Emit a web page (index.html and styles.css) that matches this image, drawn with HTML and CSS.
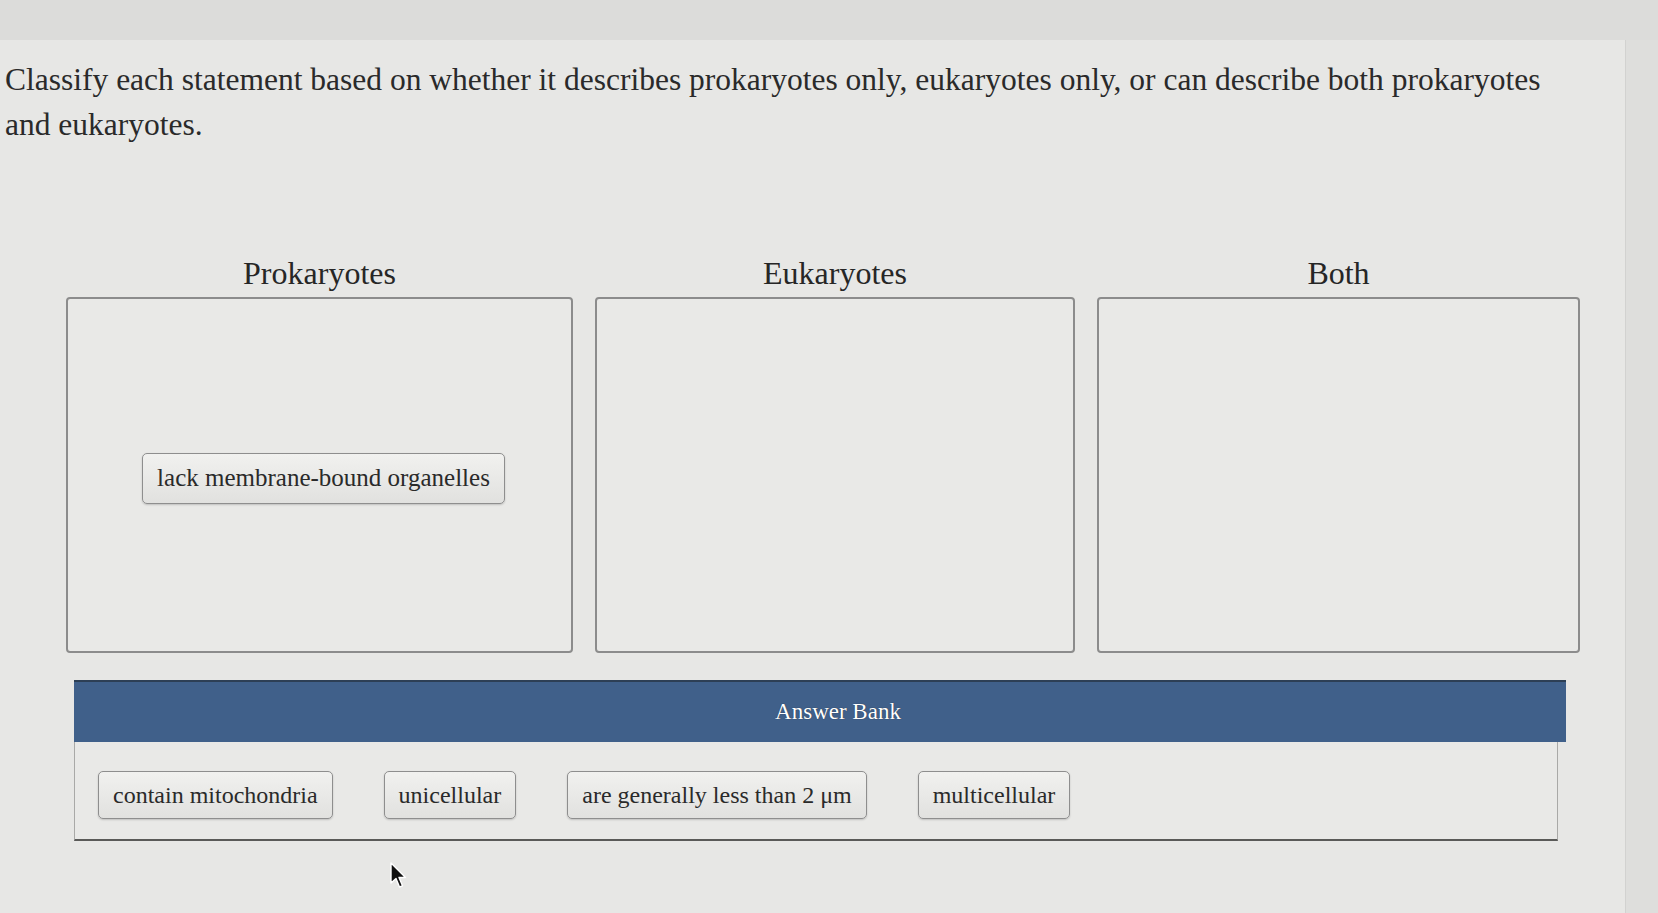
FILE: index.html
```html
<!DOCTYPE html>
<html lang="en">
<head>
<meta charset="utf-8">
<title>Classify prokaryotes and eukaryotes</title>
<link rel="stylesheet" href="styles.css">
</head>
<body>
<div class="screen">
  <div class="topbar"></div>
  <div class="content">
    <p class="question">Classify each statement based on whether it describes prokaryotes only, eukaryotes only, or can describe both prokaryotes and eukaryotes.</p>
    <div class="bins">
      <div class="bin">
        <div class="bin-label">Prokaryotes</div>
        <div class="bin-box">
          <span class="chip chip-large">lack membrane-bound organelles</span>
        </div>
      </div>
      <div class="bin">
        <div class="bin-label">Eukaryotes</div>
        <div class="bin-box"></div>
      </div>
      <div class="bin">
        <div class="bin-label">Both</div>
        <div class="bin-box"></div>
      </div>
    </div>
    <div class="bank">
      <div class="bank-header">Answer Bank</div>
      <div class="bank-body">
        <span class="chip">contain mitochondria</span>
        <span class="chip">unicellular</span>
        <span class="chip">are generally less than 2 μm</span>
        <span class="chip">multicellular</span>
      </div>
    </div>
  </div>
  <div class="right-edge"></div>
  <svg class="cursor" width="18" height="28" viewBox="0 0 18 28" aria-hidden="true">
    <path d="M1 1 L1 21 L6 16.5 L9.5 25 L12.5 23.8 L9 15.5 L15.5 15.5 Z" fill="#111" stroke="#fff" stroke-width="1.4" stroke-linejoin="round"/>
  </svg>
</div>
</body>
</html>
```

FILE: styles.css
```css
* { box-sizing: border-box; }

html, body {
  margin: 0;
  padding: 0;
  background: #e6e6e4;
}

.screen {
  position: relative;
  width: 1658px;
  height: 913px;
  overflow: hidden;
  background: #e7e7e5;
  font-family: "Liberation Serif", "Times New Roman", serif;
  color: #262626;
}

.topbar {
  height: 40px;
  background: #dcdcda;
}

.content {
  padding: 17px 0 0 5px;
  width: 1625px;
}

.question {
  margin: 0;
  font-size: 31.5px;
  line-height: 45px;
  color: #2a2a2a;
  width: 1575px;
}

.bins {
  display: grid;
  grid-template-columns: 507px 480px 483px;
  column-gap: 22px;
  margin: 106px 0 0 61px;
}

.bin-label {
  text-align: center;
  font-size: 32px;
  line-height: 40px;
  margin-bottom: 4px;
  color: #262626;
}

.bin-box {
  height: 356px;
  border: 2px solid #8c8c8c;
  border-radius: 4px;
  background: #e9e9e7;
  display: flex;
  align-items: center;
  justify-content: center;
}

.chip {
  display: inline-flex;
  align-items: center;
  height: 48px;
  padding: 0 14px;
  font-size: 24px;
  color: #2a2a2a;
  background: linear-gradient(#f1f1ef, #e1e1df);
  border: 1.5px solid #8e8e8e;
  border-radius: 5px;
  box-shadow: 0 1px 2px rgba(0, 0, 0, 0.18);
  white-space: nowrap;
}

.chip-large {
  height: 51px;
  font-size: 25px;
  padding: 0 14px;
  margin: 6px 0 0 8px;
}

.bank {
  margin: 27px 0 0 69px;
  width: 1492px;
}

.bank-header {
  height: 62px;
  background: #40608a;
  border-top: 2px solid #2d3f55;
  color: #ffffff;
  font-size: 23px;
  display: flex;
  align-items: center;
  justify-content: center;
  padding-left: 36px;
  text-shadow: 0 0 1px rgba(0, 0, 0, 0.6);
}

.bank-body {
  height: 99px;
  margin-right: 8px;
  background: #e9e9e7;
  border: 1px solid #a9a9a7;
  border-top: none;
  border-bottom: 2px solid #5a5a58;
  display: flex;
  align-items: flex-start;
  gap: 51px;
  padding: 29px 0 0 23px;
}

.right-edge {
  position: absolute;
  top: 40px;
  right: 0;
  width: 33px;
  height: 873px;
  background: #dededc;
  border-left: 1px solid #d2d2d0;
}

.cursor {
  position: absolute;
  left: 390px;
  top: 862px;
}
```
